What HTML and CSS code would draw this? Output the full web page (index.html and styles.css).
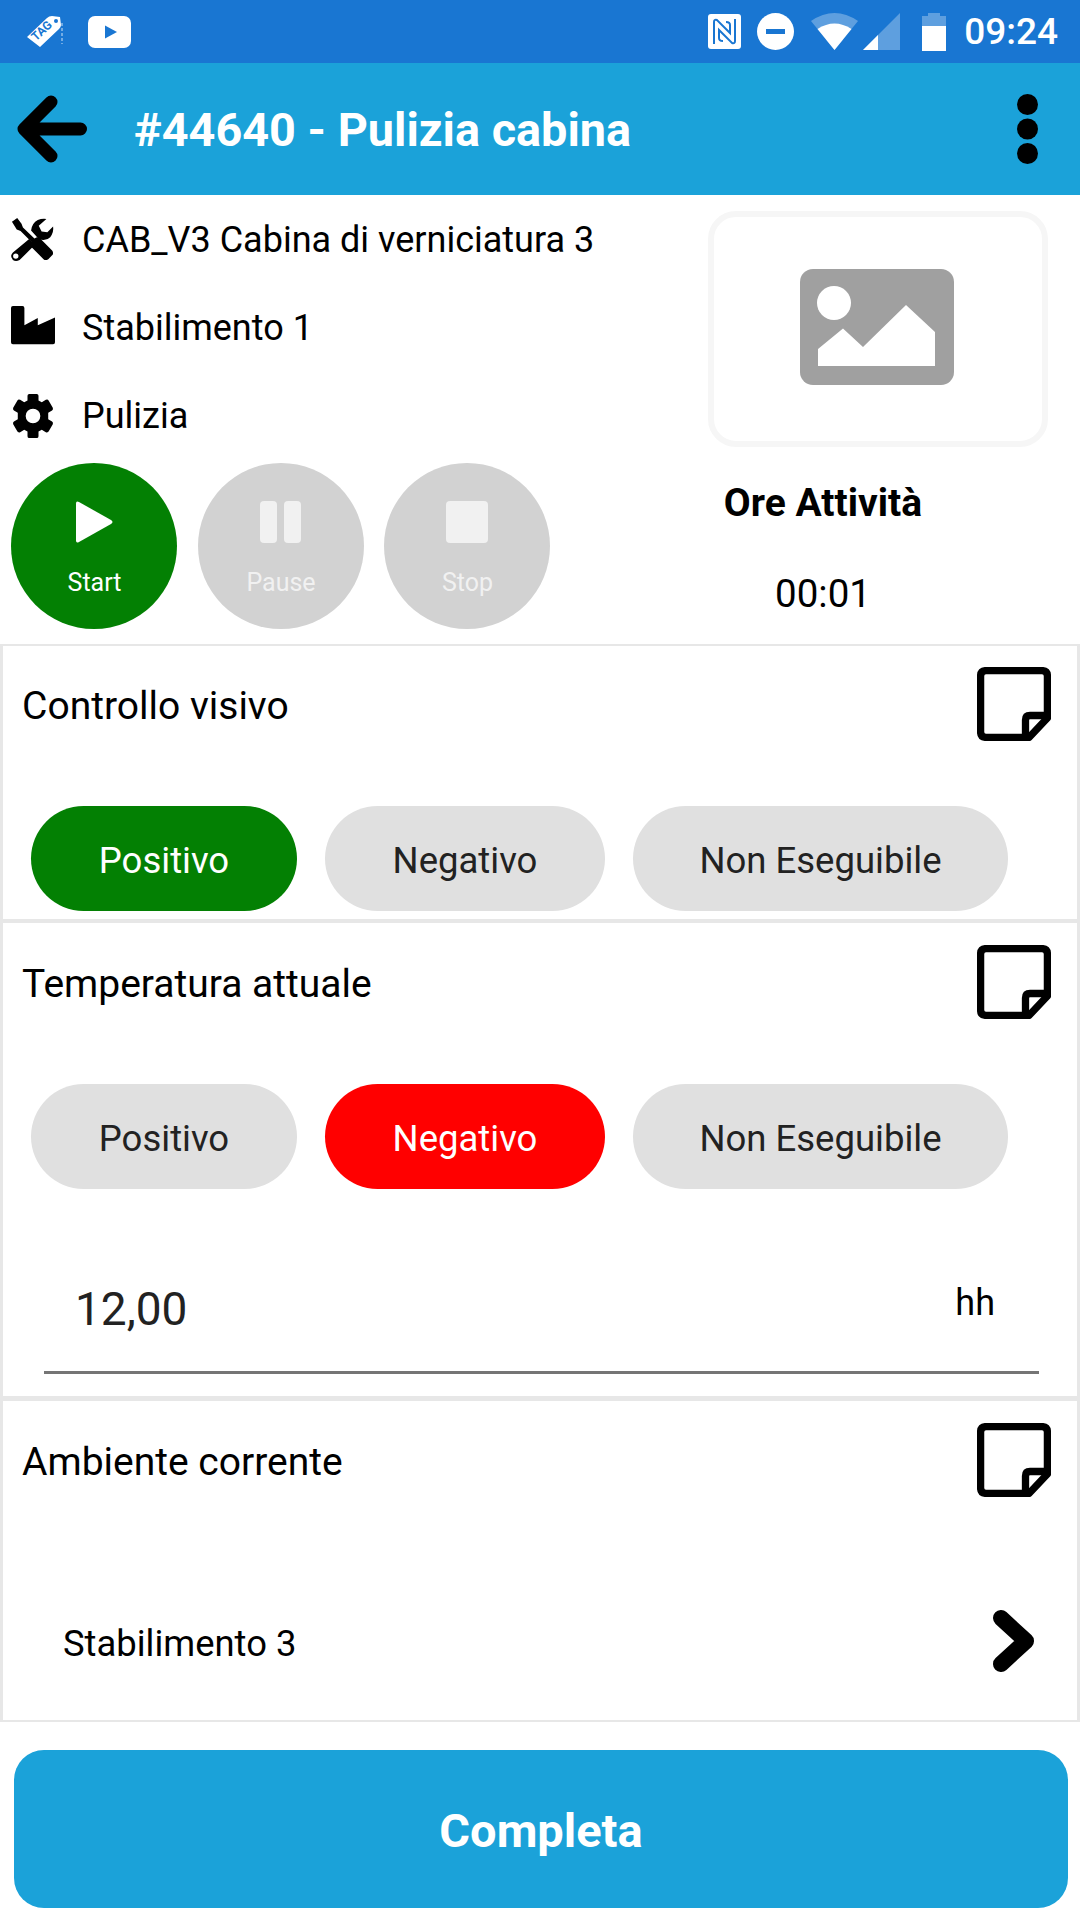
FILE: index.html
```html
<!DOCTYPE html>
<html lang="it">
<head>
    <meta charset="UTF-8">
    <title>Pulizia cabina</title>
    <link rel="stylesheet" href="styles.css">
</head>
<body>
    <div class="status-bar">
        <div class="status-left">
            <svg class="ic-tag" viewBox="0 0 36 32">
                <path d="M0 21 L20 2 Q22 0 25 0 L33 1 L34 9 Q34 11 32 13 L13 31 Z" fill="#fff"/>
                <circle cx="29" cy="5" r="2" fill="#1976d2"/>
                <path d="M35 7V28" stroke="#cfe2f6" stroke-width="1" stroke-dasharray="3 2"/>
                <text class="tag-text" x="0" y="0" transform="translate(9 25.5) rotate(-43)">TAG</text>
            </svg>
            <svg class="ic-yt" viewBox="0 0 43 32">
                <rect width="43" height="32" rx="7" fill="#fff"/>
                <path d="M17 9.500 L29 16 L17 22.500Z" fill="#1976d2"/>
            </svg>
        </div>
        <div class="status-right">
            <svg class="ic-nfc" viewBox="0 0 33 35">
                <rect width="33" height="35" rx="3" fill="#fff"/>
                <path d="M6 30V8Q6 5 9 6L22 19V11Q22 8 18 8" fill="none" stroke="#1976d2" stroke-width="2"/>
                <path d="M27 5V27Q27 30 24 29L11 16V24Q11 27 15 27" fill="none" stroke="#1976d2" stroke-width="2"/>
            </svg>
            <svg class="ic-dnd" viewBox="0 0 37 37">
                <circle cx="18.500" cy="18.500" r="18.500" fill="#fff"/>
                <rect x="9" y="16" width="19" height="5" fill="#1976d2"/>
            </svg>
            <svg class="ic-wifi" viewBox="0 0 47 37">
                <path d="M0 8 Q23.500 -8 47 8 L23.500 37Z" fill="#fff" fill-opacity=".3"/>
                <path d="M6.500 16 Q23.500 5 40.500 16 L23.500 37Z" fill="#fff"/>
            </svg>
            <svg class="ic-signal" viewBox="0 0 37 37">
                <path d="M0 37 L37 0 V37Z" fill="#fff" fill-opacity=".3"/>
                <path d="M0 37 L15 22 V37Z" fill="#fff"/>
            </svg>
            <svg class="ic-battery" viewBox="0 0 24 38">
                <path d="M0 3H6V0H18V3H24V38H0Z" fill="#fff" fill-opacity=".3"/>
                <rect y="13" width="24" height="25" fill="#fff"/>
            </svg>
            <span class="clock">09:24</span>
        </div>
    </div>

    <div class="app-bar">
        <svg class="ic-back" viewBox="0 0 70 68">
            <path d="M7 34H63.500M34 7L7 34L34 61" fill="none" stroke="#000" stroke-width="13" stroke-linecap="round" stroke-linejoin="round"/>
        </svg>
        <h1 class="title">#44640 - Pulizia cabina</h1>
        <svg class="ic-more" viewBox="0 0 21 70">
            <circle cx="10.500" cy="10.500" r="10.500"/>
            <circle cx="10.500" cy="35" r="10.500"/>
            <circle cx="10.500" cy="59.500" r="10.500"/>
        </svg>
    </div>

    <div class="top">
        <div class="top-left">
            <div class="info-row">
                <svg class="info-icon" viewBox="0 0 46 46">
                    <path d="M1 4L6.500 0L11 6L12.500 10L24.500 21.500L27 20Q29 20 30 21L43 34Q45 37 43 39L39 43Q36 45 34 43L21 30Q20 28 21 26.500L22 25.500L10 13.500L6 12Z"/>
                    <path fill-rule="evenodd" d="M19 22L25 28L9 44Q5 46 2 44L1 42Q-1 39 2 36ZM5 37A2.800 2.800 0 1 0 5 42.600A2.800 2.800 0 1 0 5 37Z"/>
                    <path d="M21 13Q22 5 28 2Q32 .5 37 1L29 8L32 14L38 15L44 9Q45 15 41 20Q36 25 29 22Z"/>
                </svg>
                <span>CAB_V3 Cabina di verniciatura 3</span>
            </div>
            <div class="info-row">
                <svg class="info-icon" viewBox="0 0 46 46">
                    <path d="M2 0H12Q14 0 14 2V20L28 12.500V20L46 12V38Q46 40 44 40H2Q0 40 0 38V2Q0 0 2 0Z"/>
                </svg>
                <span>Stabilimento 1</span>
            </div>
            <div class="info-row">
                <svg class="info-icon" viewBox="0 0 24 24">
                    <path fill-rule="evenodd" d="M10 0H14Q15 0 15 1V3.500L16.800 4.500L19 3.200Q20 2.800 20.500 3.500L22.800 7.500Q23.200 8.400 22.400 9L20.300 10.200V13.800L22.400 15Q23.200 15.600 22.800 16.500L20.500 20.500Q20 21.200 19 20.800L16.800 19.500L15 20.500V23Q15 24 14 24H10Q9 24 9 23V20.500L7.200 19.500L5 20.800Q4 21.200 3.500 20.500L1.200 16.500Q.8 15.600 1.600 15L3.700 13.800V10.200L1.600 9Q.8 8.400 1.200 7.500L3.500 3.500Q4 2.800 5 3.200L7.200 4.500L9 3.500V1Q9 0 10 0ZM12 8A4 4 0 1 0 12 16A4 4 0 1 0 12 8Z"/>
                </svg>
                <span>Pulizia</span>
            </div>
            <div class="controls">
                <div class="round-btn start">
                    <svg class="round-icon" viewBox="0 0 42 42">
                        <path d="M3 2.500Q3 -.5 6 1L38 19Q41 21 38 23L6 41Q3 42.500 3 39.500Z"/>
                    </svg>
                    <span>Start</span>
                </div>
                <div class="round-btn">
                    <svg class="round-icon" viewBox="0 0 42 42">
                        <rect width="17" height="42" rx="4"/>
                        <rect x="24" width="17" height="42" rx="4"/>
                    </svg>
                    <span>Pause</span>
                </div>
                <div class="round-btn">
                    <svg class="round-icon" viewBox="0 0 42 42">
                        <rect width="42" height="42" rx="4"/>
                    </svg>
                    <span>Stop</span>
                </div>
            </div>
        </div>
        <div class="top-right">
            <div class="photo">
                <svg class="ic-photo" viewBox="0 0 154 116">
                    <rect width="154" height="116" rx="13" fill="#a0a0a0"/>
                    <circle cx="34" cy="34" r="17" fill="#fff"/>
                    <path d="M18 97V80L43 59.500L63 78L106 36L135 63V97Z" fill="#fff"/>
                </svg>
            </div>
            <div class="hours">
                <b>Ore Attività</b>
                <span>00:01</span>
            </div>
        </div>
    </div>

    <div class="card card-first">
        <div class="card-head">
            <span>Controllo visivo</span>
            <svg class="ic-note" viewBox="0 0 74 74"><use href="#note"/></svg>
        </div>
        <div class="pills">
            <div class="pill p1 green">Positivo</div>
            <div class="pill p2">Negativo</div>
            <div class="pill p3">Non Eseguibile</div>
        </div>
    </div>

    <div class="card card-second">
        <div class="card-head">
            <span>Temperatura attuale</span>
            <svg class="ic-note" viewBox="0 0 74 74"><use href="#note"/></svg>
        </div>
        <div class="pills">
            <div class="pill p1">Positivo</div>
            <div class="pill p2 red">Negativo</div>
            <div class="pill p3">Non Eseguibile</div>
        </div>
        <div class="field">
            <span class="field-value">12,00</span>
            <span class="field-unit">hh</span>
        </div>
    </div>

    <div class="card card-third">
        <div class="card-head">
            <span>Ambiente corrente</span>
            <svg class="ic-note" viewBox="0 0 74 74"><use href="#note"/></svg>
        </div>
        <div class="picker">
            <span>Stabilimento 3</span>
            <svg class="ic-chevron" viewBox="0 0 41 62">
                <path d="M8 8L33 31L8 54" fill="none" stroke="#000" stroke-width="16" stroke-linecap="round" stroke-linejoin="round"/>
            </svg>
        </div>
    </div>

    <div class="footer">
        <div class="complete">Completa</div>
    </div>

    <svg class="defs" width="0" height="0">
        <defs>
            <g id="note" fill="none" stroke="#000" stroke-width="7.300" stroke-linejoin="round">
                <path d="M9 3.600H65Q70.400 3.600 70.400 9V51L52 70.400H9Q3.600 70.400 3.600 65V9Q3.600 3.600 9 3.600Z"/>
                <path d="M48.500 70.400V53Q48.500 48.500 53 48.500H70.400"/>
            </g>
        </defs>
    </svg>
</body>
</html>
```

FILE: styles.css
```css
body {
    font-family: 'Roboto', sans-serif;
    margin: 0;
    width: 1080px;
    height: 1920px;
    overflow: hidden;
    background-color: white;
    color: black;
}
svg {
    display: block;
    flex: none;
}
.defs {
    position: absolute;
}
.status-bar {
    height: 63px;
    background-color: #1976d2;
    display: flex;
    justify-content: space-between;
    align-items: center;
    color: white;
}
.status-left {
    display: flex;
    align-items: center;
    padding-left: 27px;
}
.status-right {
    display: flex;
    align-items: center;
    padding-right: 22px;
}
.ic-tag {
    width: 36px;
    height: 32px;
    margin-right: 25px;
}
.tag-text {
    font-size: 12px;
    font-weight: 700;
    fill: #1976d2;
}
.ic-yt {
    width: 43px;
    height: 32px;
}
.ic-nfc {
    width: 33px;
    height: 35px;
    margin-right: 16px;
}
.ic-dnd {
    width: 37px;
    height: 37px;
    margin-right: 17px;
}
.ic-wifi {
    width: 47px;
    height: 37px;
    margin-right: 5px;
}
.ic-signal {
    width: 37px;
    height: 37px;
    margin-right: 22px;
}
.ic-battery {
    width: 24px;
    height: 38px;
    margin-right: 18px;
}
.clock {
    font-size: 37px;
    font-weight: 500;
}
.app-bar {
    height: 132px;
    background-color: #1ba2d9;
    display: flex;
    align-items: center;
    padding: 0 42px 0 17px;
}
.ic-back {
    width: 70px;
    height: 68px;
}
.title {
    flex: 1;
    margin: 2px 0 0 47px;
    font-size: 46.800px;
    font-weight: 700;
    color: white;
}
.ic-more {
    width: 21px;
    height: 70px;
}
.top {
    height: 449px;
    display: flex;
}
.top-left {
    width: 707px;
    padding-left: 11px;
    box-sizing: border-box;
}
.info-row {
    height: 88px;
    display: flex;
    align-items: center;
    font-size: 36px;
}
.info-row:first-child {
    margin-top: 1px;
}
.info-icon {
    width: 44px;
    height: 44px;
    margin-right: 27px;
}
.controls {
    display: flex;
    gap: 20.500px;
    margin-top: 3px;
}
.round-btn {
    width: 166px;
    height: 166px;
    border-radius: 50%;
    background-color: #d2d2d2;
    color: #f1f1f1;
    fill: #f1f1f1;
    display: flex;
    flex-direction: column;
    align-items: center;
    font-size: 25px;
    padding-top: 38px;
    box-sizing: border-box;
}
.round-btn span {
    margin-top: 25px;
    padding-left: 1px;
}
.start {
    background-color: #038003;
    color: white;
    fill: white;
}
.round-icon {
    width: 42px;
    height: 42px;
}
.top-right {
    width: 341px;
}
.photo {
    width: 340px;
    height: 236px;
    margin: 16px 0 0 1px;
    box-sizing: border-box;
    border: 6px solid #f6f6f6;
    border-radius: 28px;
    display: flex;
    justify-content: center;
    align-items: center;
}
.ic-photo {
    width: 154px;
    height: 116px;
    margin: -4px 2px 0 0;
}
.hours {
    width: 230px;
    padding-left: 1px;
    text-align: center;
    font-size: 38.500px;
}
.hours b {
    display: block;
    margin-top: 33px;
    font-size: 39px;
}
.hours span {
    display: block;
    margin-top: 45px;
}
.card {
    border: solid #e7e7e7;
    border-width: 2px 3px;
    box-sizing: border-box;
}
.card-first {
    height: 277px;
}
.card-second {
    height: 478px;
    border-bottom-width: 3px;
}
.card-third {
    height: 323px;
}
.card-head {
    display: flex;
    justify-content: space-between;
    align-items: center;
    font-size: 39px;
    padding: 21px 26px 0 19px;
}
.card-head span {
    padding-top: 3px;
}
.card-second .card-head,
.card-third .card-head {
    padding-top: 22px;
}
.ic-note {
    width: 74px;
    height: 74px;
}
.pills {
    display: flex;
    gap: 28px;
    margin: 65px 0 0 28px;
}
.pill {
    height: 105px;
    border-radius: 53px;
    background-color: #e0e0e0;
    display: flex;
    justify-content: center;
    align-items: center;
    font-size: 36.500px;
    padding-top: 4px;
    box-sizing: border-box;
    color: #222;
}
.p1 {
    width: 266px;
}
.p2 {
    width: 280px;
}
.p3 {
    width: 375px;
}
.green {
    background-color: #038003;
    color: white;
}
.red {
    background-color: #ff0000;
    color: white;
}
.field {
    display: flex;
    justify-content: space-between;
    margin: 93px 38px 0 41px;
    padding: 0 44px 35px 31px;
    border-bottom: 3px solid #757575;
}
.field-value {
    font-size: 46px;
    color: #222;
}
.field-unit {
    font-size: 36px;
}
.picker {
    display: flex;
    justify-content: space-between;
    align-items: center;
    font-size: 36.400px;
    margin-top: 113px;
    padding: 0 43px 0 60px;
}
.picker span {
    padding-top: 4px;
}
.ic-chevron {
    width: 41px;
    height: 62px;
}
.footer {
    padding: 28px 12px 0 14px;
}
.complete {
    height: 158px;
    border-radius: 30px;
    background-color: #1ba2d9;
    color: white;
    font-size: 47px;
    font-weight: 700;
    padding-top: 2px;
    box-sizing: border-box;
    display: flex;
    justify-content: center;
    align-items: center;
}
```
